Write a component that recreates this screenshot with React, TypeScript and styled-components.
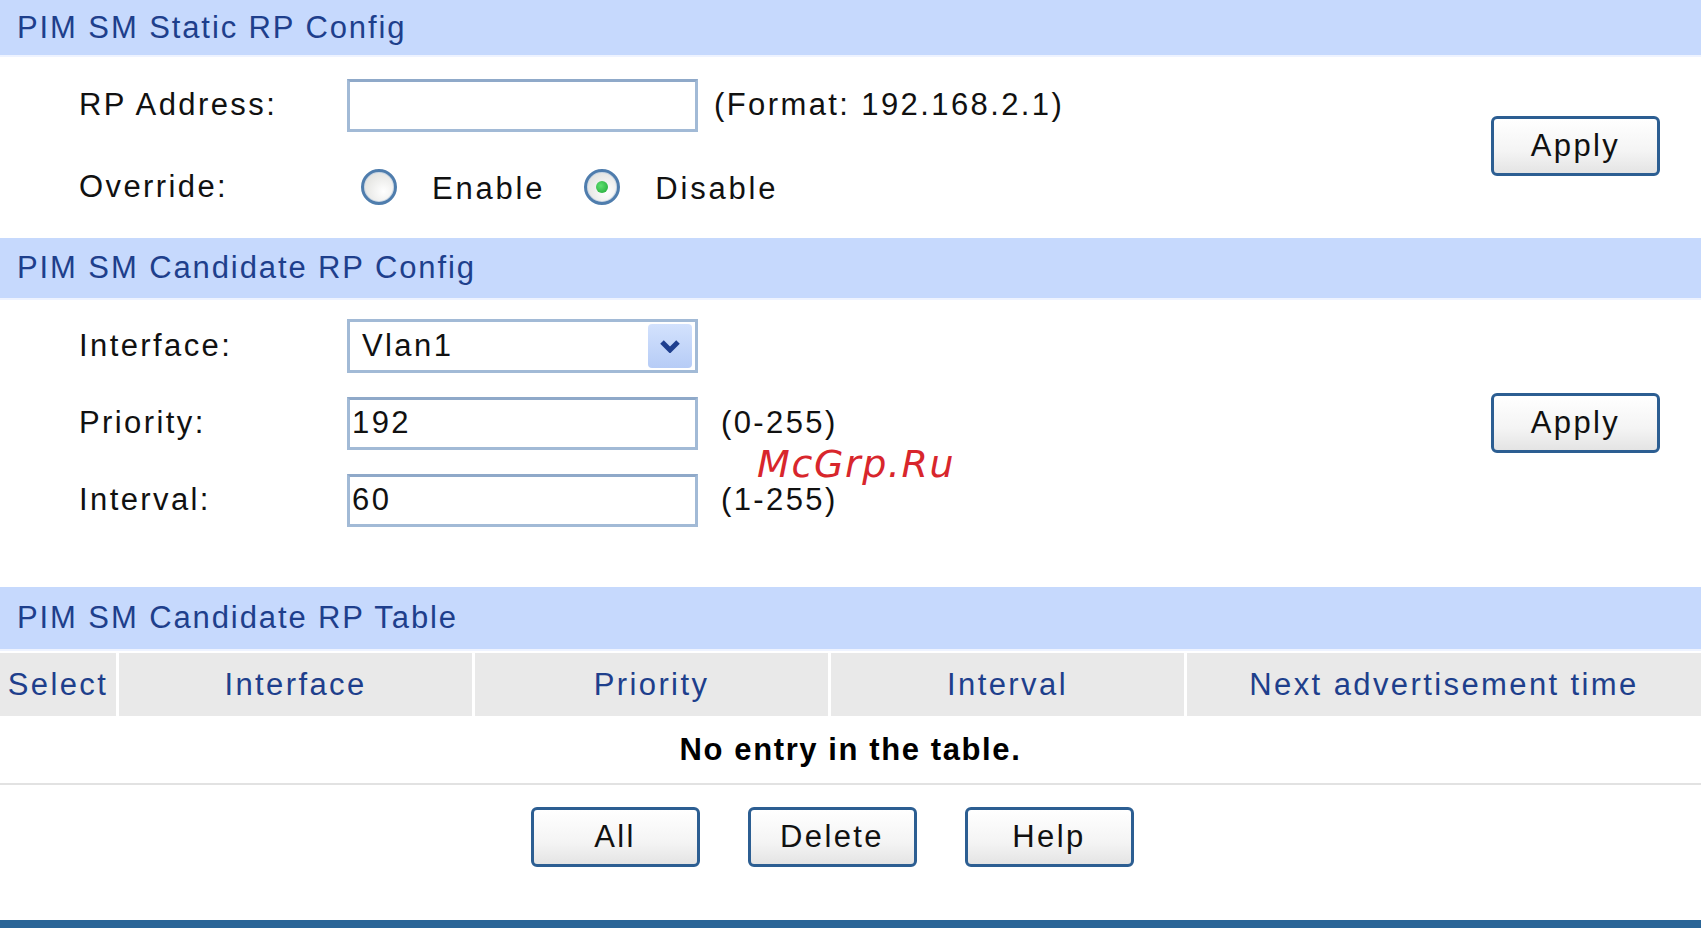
import React from 'react'
import styled, { createGlobalStyle } from 'styled-components'

const GlobalStyle = createGlobalStyle`
  html, body {
    margin: 0;
    padding: 0;
    background: #ffffff;
  }
  body {
    font-family: 'Liberation Sans', Arial, sans-serif;
    color: #111111;
  }
`

const Page = styled.div`
  position: relative;
  width: 1701px;
  height: 928px;
  overflow: hidden;
  display: flex;
  flex-direction: column;
  font-size: 31px;
  letter-spacing: 2.4px;
`

const SectionHeader = styled.div<{ $h: number }>`
  height: ${({ $h }) => $h}px;
  background: #c6d9fd;
  color: #1e3f8c;
  display: flex;
  align-items: center;
  padding-left: 17px;
  letter-spacing: 1.9px;
  border-bottom: 2px solid #eef3ff;
  box-sizing: border-box;
`

const SectionBody = styled.div<{ $pt: number; $pb: number }>`
  display: flex;
  align-items: center;
  justify-content: space-between;
  padding: ${({ $pt }) => $pt}px 41px ${({ $pb }) => $pb}px 79px;
`

const FormGrid = styled.div<{ $gap: number }>`
  display: grid;
  grid-template-columns: 268px auto;
  row-gap: ${({ $gap }) => $gap}px;
  align-items: center;
`

const Label = styled.div`
  height: 54px;
  display: flex;
  align-items: center;
`

const Control = styled.div`
  height: 54px;
  display: flex;
  align-items: center;
`

const TextInput = styled.input`
  width: 351px;
  height: 53px;
  box-sizing: border-box;
  border: 3px solid #a2bad6;
  border-top-color: #8fa9c9;
  padding: 0 0 0 2px;
  font-family: 'Liberation Sans', Arial, sans-serif;
  font-size: 31px;
  letter-spacing: 2.4px;
  color: #111;
  outline: none;
  background: #fff;
`

const Hint = styled.span<{ $ml: number }>`
  margin-left: ${({ $ml }) => $ml}px;
`

const SelectBox = styled.div`
  width: 351px;
  height: 54px;
  box-sizing: border-box;
  border: 3px solid #a2bad6;
  display: flex;
  align-items: center;
  justify-content: space-between;
  padding: 0 3px 0 12px;
  background: #fff;
`

const SelectArrow = styled.div`
  width: 44px;
  height: 44px;
  border-radius: 4px;
  background: linear-gradient(#d3e2fd, #b6ccf6);
  display: flex;
  align-items: center;
  justify-content: center;
`

const RadioGroup = styled.div`
  display: flex;
  align-items: center;
  margin-left: 14px;
`

const RadioCircle = styled.span<{ $checked?: boolean }>`
  width: 36px;
  height: 36px;
  box-sizing: border-box;
  border-radius: 50%;
  border: 3px solid #4f7dad;
  box-shadow: inset 0 0 0 1px #c9d6e4;
  background: radial-gradient(circle at 65% 65%, #ffffff, #dadad6);
  display: inline-flex;
  align-items: center;
  justify-content: center;
  &::after {
    content: '';
    display: ${({ $checked }) => ($checked ? 'block' : 'none')};
    width: 12px;
    height: 12px;
    border-radius: 50%;
    background: radial-gradient(circle at 40% 40%, #5fe070, #1ea535);
  }
`

const RadioText = styled.span`
  margin: 4px 39px 0 35px;
  letter-spacing: 2.8px;
`

const Button = styled.button`
  width: 169px;
  height: 60px;
  border: 3px solid #2c5e92;
  border-radius: 6px;
  background: linear-gradient(#ffffff 0%, #f4f4f4 60%, #e4e4e4 100%);
  font-family: 'Liberation Sans', Arial, sans-serif;
  font-size: 31px;
  letter-spacing: 2.4px;
  color: #111;
  padding: 0;
`

const TableHead = styled.div`
  display: grid;
  grid-template-columns: 116px 353px 353px 353px 1fr;
  column-gap: 3px;
  height: 63px;
  margin-top: 2px;
`

const HeadCell = styled.div`
  background: #e9e9e9;
  color: #1e3f8c;
  display: flex;
  align-items: center;
  justify-content: center;
`

const EmptyRow = styled.div`
  height: 67px;
  border-bottom: 2px solid #e2e2e2;
  display: flex;
  align-items: center;
  justify-content: center;
  font-weight: bold;
  letter-spacing: 1.6px;
  color: #000;
`

const ButtonBar = styled.div`
  display: flex;
  justify-content: center;
  gap: 48px;
  margin-top: 22px;
  padding-right: 37px;
`

const BottomBar = styled.div`
  margin-top: auto;
  height: 8px;
  background: #2a6597;
`

const Watermark = styled.div`
  position: absolute;
  left: 757px;
  top: 442px;
  font-family: 'DejaVu Sans', sans-serif;
  font-style: italic;
  font-size: 38px;
  letter-spacing: 1.6px;
  color: #d8262c;
`

const Chevron = () => (
  <svg width="22" height="14" viewBox="0 0 22 14">
    <path d="M3 3 L11 11 L19 3" fill="none" stroke="#1f3f8f" strokeWidth="5" />
  </svg>
)

export default function App() {
  return (
    <>
      <GlobalStyle />
      <Page>
        <SectionHeader $h={57}>PIM SM Static RP Config</SectionHeader>
        <SectionBody $pt={21} $pb={24}>
          <FormGrid $gap={28}>
            <Label>RP Address:</Label>
            <Control>
              <TextInput defaultValue="" />
              <Hint $ml={16}>(Format: 192.168.2.1)</Hint>
            </Control>
            <Label>Override:</Label>
            <Control>
              <RadioGroup>
                <RadioCircle />
                <RadioText>Enable</RadioText>
                <RadioCircle $checked />
                <RadioText>Disable</RadioText>
              </RadioGroup>
            </Control>
          </FormGrid>
          <Button>Apply</Button>
        </SectionBody>

        <SectionHeader $h={62}>PIM SM Candidate RP Config</SectionHeader>
        <SectionBody $pt={19} $pb={60}>
          <FormGrid $gap={23}>
            <Label>Interface:</Label>
            <Control>
              <SelectBox>
                <span>Vlan1</span>
                <SelectArrow>
                  <Chevron />
                </SelectArrow>
              </SelectBox>
            </Control>
            <Label>Priority:</Label>
            <Control>
              <TextInput defaultValue="192" />
              <Hint $ml={23}>(0-255)</Hint>
            </Control>
            <Label>Interval:</Label>
            <Control>
              <TextInput defaultValue="60" />
              <Hint $ml={23}>(1-255)</Hint>
            </Control>
          </FormGrid>
          <Button>Apply</Button>
        </SectionBody>

        <SectionHeader $h={64}>PIM SM Candidate RP Table</SectionHeader>
        <TableHead>
          <HeadCell>Select</HeadCell>
          <HeadCell>Interface</HeadCell>
          <HeadCell>Priority</HeadCell>
          <HeadCell>Interval</HeadCell>
          <HeadCell>Next advertisement time</HeadCell>
        </TableHead>
        <EmptyRow>No entry in the table.</EmptyRow>
        <ButtonBar>
          <Button>All</Button>
          <Button>Delete</Button>
          <Button>Help</Button>
        </ButtonBar>
        <BottomBar />
        <Watermark>McGrp.Ru</Watermark>
      </Page>
    </>
  )
}
